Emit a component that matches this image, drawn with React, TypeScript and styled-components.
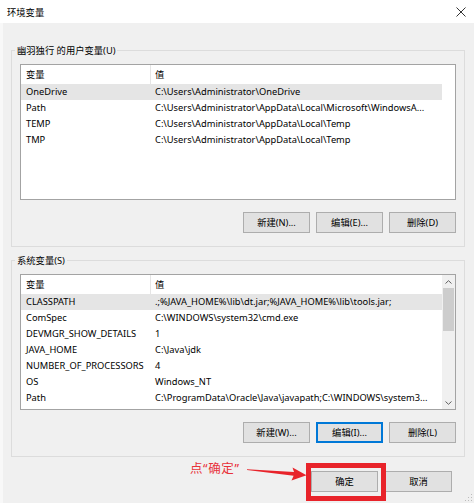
import React from 'react';
import styled, { createGlobalStyle, css } from 'styled-components';

const GlobalStyle = createGlobalStyle`
  html, body { margin: 0; padding: 0; background: #f0f0f0; }
  body {
    font-family: "Noto Sans", "Noto Sans CJK SC", sans-serif;
    font-size: 9.3px;
    color: #000;
  }
`;

const Window = styled.div`
  width: 474px;
  height: 503px;
  display: flex;
  flex-direction: column;
  background: #f0f0f0;
  overflow: hidden;
  position: relative;
`;

const TitleBar = styled.div`
  height: 23px;
  flex: none;
  background: #fff;
  display: flex;
  align-items: center;
  justify-content: space-between;
  padding: 0 8px 0 7px;
`;

const Title = styled.span`
  font-size: 9.3px;
  color: #000;
`;

const Body = styled.div`
  flex: 1;
  display: flex;
  flex-direction: column;
  padding: 20px 9px 0 8px;
  border-left: 3px solid #f8f8f8;
`;

const Group = styled.fieldset<{ $gap?: number }>`
  margin: ${(p) => p.$gap ?? 0}px 0 0 0;
  padding: 0;
  border: 1px solid #dcdcdc;
  min-width: 0;
`;

const Legend = styled.legend`
  margin-left: 3px;
  padding: 0 2px;
  line-height: 15px;
  font-size: 9.3px;
  color: #000;
`;

const GroupContent = styled.div`
  padding: 6px 8px 13px 8px;
`;

const List = styled.div`
  height: 136px;
  box-sizing: border-box;
  border: 1px solid #a3a3a3;
  background: #fff;
  display: flex;
  overflow: hidden;
`;

const ListBody = styled.div<{ $gutter?: boolean }>`
  flex: 1;
  min-width: 0;
  display: flex;
  flex-direction: column;
  padding-right: ${(p) => (p.$gutter ? 13 : 0)}px;
`;

const rowGrid = css`
  display: grid;
  grid-template-columns: 129px 1fr;
  white-space: nowrap;
`;

const HeaderRow = styled.div`
  ${rowGrid};
  height: 19px;
  line-height: 19px;
`;

const HeaderCell = styled.div<{ $divider?: boolean }>`
  padding-left: ${(p) => (p.$divider ? 4 : 5)}px;
  border-left: ${(p) => (p.$divider ? '1px solid #e5e5e5' : 'none')};
  overflow: hidden;
`;

const Row = styled.div<{ $selected?: boolean }>`
  ${rowGrid};
  height: 16px;
  line-height: 16px;
  background: ${(p) => (p.$selected ? '#e5e5e5' : 'transparent')};
`;

const Cell = styled.div`
  padding-left: 5px;
  overflow: hidden;
`;

const Scrollbar = styled.div`
  width: 13px;
  flex: none;
  background: #f0f0f0;
  display: flex;
  flex-direction: column;
`;

const ScrollArrow = styled.div`
  height: 13px;
  display: flex;
  align-items: center;
  justify-content: center;
`;

const ScrollTrack = styled.div`
  flex: 1;
  padding: 0 1px;
`;

const Thumb = styled.div`
  height: 43px;
  background: #cdcdcd;
`;

const ButtonRow = styled.div`
  display: flex;
  justify-content: flex-end;
  gap: 6px;
  margin-top: 12px;
`;

const Button = styled.button<{ $focused?: boolean }>`
  width: 67px;
  height: 21px;
  box-sizing: border-box;
  padding: 0;
  margin: 0;
  background: #e1e1e1;
  border: 1px solid ${(p) => (p.$focused ? '#0078d7' : '#adadad')};
  box-shadow: ${(p) => (p.$focused ? 'inset 0 0 0 1px #0078d7' : 'none')};
  font-family: "Noto Sans", "Noto Sans CJK SC", sans-serif;
  font-size: 9.3px;
  color: #000;
  line-height: 19px;
`;

const BottomRow = styled.div`
  display: flex;
  justify-content: flex-end;
  gap: 7px;
  margin-top: 14px;
  padding-right: 13px;
`;

const OkWrap = styled.div`
  position: relative;
`;

const RedFrame = styled.div`
  position: absolute;
  top: -8px;
  left: -5px;
  right: -8px;
  bottom: -9px;
  border: 5px solid #e8232a;
  pointer-events: none;
`;

const Callout = styled.div`
  position: absolute;
  top: -11px;
  left: -121px;
  display: flex;
  align-items: flex-start;
  pointer-events: none;
`;

const CalloutText = styled.span`
  font-family: "Noto Sans", "Noto Sans CJK SC", sans-serif;
  font-size: 12.5px;
  line-height: 17px;
  letter-spacing: 0.6px;
  color: #e8323a;
  white-space: nowrap;
`;

const ArrowSvg = styled.svg`
  position: absolute;
  left: 54px;
  top: 1px;
  overflow: visible;
`;

const Grip = styled.svg`
  position: absolute;
  right: 1px;
  bottom: 1px;
`;

const userVars: [string, string][] = [
  ['OneDrive', 'C:\\Users\\Administrator\\OneDrive'],
  ['Path', 'C:\\Users\\Administrator\\AppData\\Local\\Microsoft\\WindowsA...'],
  ['TEMP', 'C:\\Users\\Administrator\\AppData\\Local\\Temp'],
  ['TMP', 'C:\\Users\\Administrator\\AppData\\Local\\Temp'],
];

const sysVars: [string, string][] = [
  ['CLASSPATH', '.;%JAVA_HOME%\\lib\\dt.jar;%JAVA_HOME%\\lib\\tools.jar;'],
  ['ComSpec', 'C:\\WINDOWS\\system32\\cmd.exe'],
  ['DEVMGR_SHOW_DETAILS', '1'],
  ['JAVA_HOME', 'C:\\Java\\jdk'],
  ['NUMBER_OF_PROCESSORS', '4'],
  ['OS', 'Windows_NT'],
  ['Path', 'C:\\ProgramData\\Oracle\\Java\\javapath;C:\\WINDOWS\\system3...'],
];

const CloseIcon = () => (
  <svg width="10" height="10" viewBox="0 0 10 10">
    <path d="M0.5 0.5 L9.5 9.5 M9.5 0.5 L0.5 9.5" stroke="#333" strokeWidth="1" fill="none" />
  </svg>
);

const Chevron = ({ up }: { up?: boolean }) => (
  <svg width="7" height="4" viewBox="0 0 7 4">
    <path
      d={up ? 'M0.5 3.5 L3.5 0.7 L6.5 3.5' : 'M0.5 0.5 L3.5 3.3 L6.5 0.5'}
      stroke="#606060"
      strokeWidth="1"
      fill="none"
    />
  </svg>
);

const VarList = ({ rows, scroll }: { rows: [string, string][]; scroll?: boolean }) => (
  <List>
    <ListBody $gutter={!scroll}>
      <HeaderRow>
        <HeaderCell>变量</HeaderCell>
        <HeaderCell $divider>值</HeaderCell>
      </HeaderRow>
      {rows.map(([k, v], i) => (
        <Row key={k + i} $selected={i === 0}>
          <Cell>{k}</Cell>
          <Cell>{v}</Cell>
        </Row>
      ))}
    </ListBody>
    {scroll && (
      <Scrollbar>
        <ScrollArrow>
          <Chevron up />
        </ScrollArrow>
        <ScrollTrack>
          <Thumb />
        </ScrollTrack>
        <ScrollArrow>
          <Chevron />
        </ScrollArrow>
      </Scrollbar>
    )}
  </List>
);

export default function App() {
  return (
    <Window>
      <GlobalStyle />
      <TitleBar>
        <Title>环境变量</Title>
        <CloseIcon />
      </TitleBar>
      <Body>
        <Group>
          <Legend>幽羽独行 的用户变量(U)</Legend>
          <GroupContent>
            <VarList rows={userVars} />
            <ButtonRow>
              <Button>新建(N)...</Button>
              <Button>编辑(E)...</Button>
              <Button>删除(D)</Button>
            </ButtonRow>
          </GroupContent>
        </Group>
        <Group $gap={6}>
          <Legend>系统变量(S)</Legend>
          <GroupContent>
            <VarList rows={sysVars} scroll />
            <ButtonRow>
              <Button>新建(W)...</Button>
              <Button $focused>编辑(I)...</Button>
              <Button>删除(L)</Button>
            </ButtonRow>
          </GroupContent>
        </Group>
        <BottomRow>
          <OkWrap>
            <Button>确定</Button>
            <RedFrame />
            <Callout>
              <CalloutText>点“确定”</CalloutText>
              <ArrowSvg width="66" height="24" viewBox="0 0 66 24">
                <polygon
                  points="3,8.3 50,11.1 48.5,6.5 62.5,14.2 47.5,19.5 49.6,14.7 3,8.9"
                  fill="#e8232a"
                />
              </ArrowSvg>
            </Callout>
          </OkWrap>
          <Button>取消</Button>
        </BottomRow>
      </Body>
      <Grip width="8" height="8" viewBox="0 0 8 8">
        <rect x="6" y="0" width="1" height="1" fill="#bcbcbc" />
        <rect x="3" y="3" width="1" height="1" fill="#bcbcbc" />
        <rect x="6" y="3" width="1" height="1" fill="#bcbcbc" />
        <rect x="0" y="6" width="1" height="1" fill="#bcbcbc" />
        <rect x="3" y="6" width="1" height="1" fill="#bcbcbc" />
        <rect x="6" y="6" width="1" height="1" fill="#bcbcbc" />
      </Grip>
    </Window>
  );
}
